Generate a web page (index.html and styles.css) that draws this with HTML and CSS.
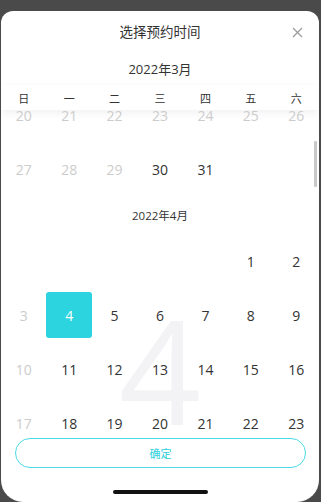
FILE: index.html
```html
<!DOCTYPE html>
<html lang="zh-CN">
<head>
    <meta charset="UTF-8">
    <meta name="viewport" content="width=device-width, initial-scale=1.0">
    <title>选择预约时间</title>
    <link rel="stylesheet" href="styles.css">
</head>
<body>
    <div class="sheet">
        <div class="sheet-header">
            <span class="sheet-title">选择预约时间</span>
            <span class="close">
                <svg width="11" height="11" viewBox="0 0 11 11"><path d="M1 1L10 10M10 1L1 10" stroke="#9a9a9a" stroke-width="1.2" fill="none"/></svg>
            </span>
        </div>
        <div class="current-month">2022年3月</div>
        <div class="weekdays">
            <span>日</span><span>一</span><span>二</span><span>三</span><span>四</span><span>五</span><span>六</span>
        </div>

        <div class="scroll-area">
            <div class="scroll-content">
                <div class="days">
                    <span class="day past">20</span><span class="day past">21</span><span class="day past">22</span><span class="day past">23</span><span class="day past">24</span><span class="day past">25</span><span class="day past">26</span>
                    <span class="day past">27</span><span class="day past">28</span><span class="day past">29</span><span class="day">30</span><span class="day">31</span><span class="day"></span><span class="day"></span>
                </div>

                <div class="month-label">2022年4月</div>
                <div class="days month-body">
                    <div class="watermark">4</div>
                    <span class="day"></span><span class="day"></span><span class="day"></span><span class="day"></span><span class="day"></span><span class="day">1</span><span class="day">2</span>
                    <span class="day past">3</span><span class="day"><b class="selected">4</b></span><span class="day">5</span><span class="day">6</span><span class="day">7</span><span class="day">8</span><span class="day">9</span>
                    <span class="day past">10</span><span class="day">11</span><span class="day">12</span><span class="day">13</span><span class="day">14</span><span class="day">15</span><span class="day">16</span>
                    <span class="day past">17</span><span class="day">18</span><span class="day">19</span><span class="day">20</span><span class="day">21</span><span class="day">22</span><span class="day">23</span>
                    <span class="day past">24</span><span class="day">25</span><span class="day">26</span><span class="day">27</span><span class="day">28</span><span class="day">29</span><span class="day">30</span>
                </div>
            </div>
            <div class="scrollbar"></div>
        </div>

        <div class="sheet-footer">
            <button type="button" class="confirm">确定</button>
            <div class="home-bar"></div>
        </div>
    </div>
</body>
</html>
```

FILE: styles.css
```css
body {
    font-family: "Open Sans", "Noto Sans CJK SC", sans-serif;
    background-color: #4a4a4a;
    margin: 0;
    padding: 0;
    height: 502px;
    overflow: hidden;
    color: #333;
}

.sheet {
    margin: 11px 2px 0 1px;
    height: 491px;
    background-color: #fff;
    border-radius: 12px 12px 22px 22px;
    display: flex;
    flex-direction: column;
    overflow: hidden;
}

.sheet-header {
    position: relative;
    height: 40px;
    display: flex;
    justify-content: center;
    align-items: center;
}

.sheet-title {
    font-size: 13.5px;
}

.close {
    position: absolute;
    right: 16px;
    top: 16px;
    line-height: 0;
}

.current-month {
    height: 34px;
    display: flex;
    justify-content: center;
    align-items: center;
    font-size: 13px;
}

.weekdays {
    position: relative;
    z-index: 1;
    height: 25px;
    display: grid;
    grid-template-columns: repeat(7, 1fr);
    align-items: center;
    font-size: 11px;
    text-align: center;
    background-color: #fff;
    box-shadow: 0 3px 8px rgba(0, 0, 0, 0.06);
}

.scroll-area {
    position: relative;
    flex: 1;
    overflow: hidden;
}

.scroll-content {
    margin-top: -22px;
}

.days {
    display: grid;
    grid-template-columns: repeat(7, 1fr);
}

.day {
    position: relative;
    z-index: 1;
    height: 54px;
    display: flex;
    justify-content: center;
    align-items: center;
    font-size: 14px;
    color: #333;
}

.day.past {
    color: #ccc;
}

.selected {
    width: 100%;
    height: 46px;
    display: flex;
    justify-content: center;
    align-items: center;
    background-color: #2bd4de;
    border-radius: 3px;
    color: #fff;
    font-weight: normal;
}

.month-label {
    height: 38px;
    display: flex;
    justify-content: center;
    align-items: center;
    font-size: 11.5px;
}

.month-body {
    position: relative;
}

.watermark {
    position: absolute;
    left: 0;
    right: 0;
    top: 0;
    bottom: 0;
    display: flex;
    justify-content: center;
    align-items: center;
    font-size: 144px;
    color: #f3f3f5;
    z-index: 0;
}

.scrollbar {
    position: absolute;
    right: 2px;
    top: 31px;
    width: 3px;
    height: 46px;
    background-color: #c8c8c8;
    border-radius: 1px;
}

.sheet-footer {
    height: 67px;
    padding: 3px 13px 0 14px;
    box-sizing: border-box;
    display: flex;
    flex-direction: column;
    align-items: center;
}

.confirm {
    width: 100%;
    height: 30px;
    border: 1px solid #4ad9e5;
    border-radius: 15px;
    background-color: #fff;
    color: #2ccfdd;
    font-family: "Open Sans", "Noto Sans CJK SC", sans-serif;
    font-size: 11px;
    cursor: pointer;
}

.home-bar {
    margin-top: 22px;
    width: 95px;
    height: 4px;
    border-radius: 2px;
    background-color: #111;
}
```
